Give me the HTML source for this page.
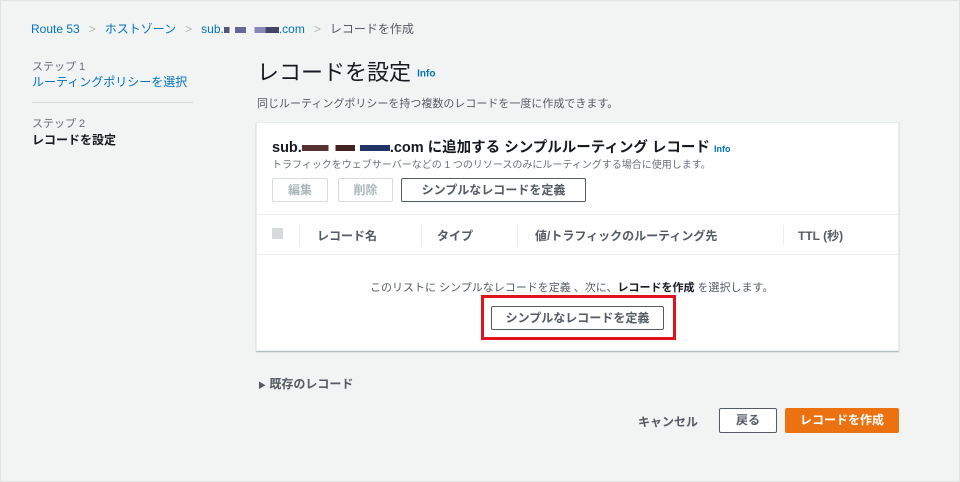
<!DOCTYPE html>
<html><head><meta charset="utf-8"><style>
*{box-sizing:border-box;margin:0;padding:0}
body{width:960px;height:482px;background:#f2f3f3;font-family:"Liberation Sans","Noto Sans CJK JP",sans-serif;color:#16191f;position:relative;overflow:hidden;border:1px solid #e0e2e2}
.a{position:absolute;white-space:nowrap}
.bc{top:19px;left:30px;font-size:12px;color:#545b64}
.bc .l{color:#0073bb}
.bc .s{color:#aab7b8;margin:0 9px}
.btn{position:absolute;border:1px solid #545b64;background:#fff;border-radius:2px;font-size:12px;font-weight:bold;color:#545b64;text-align:center}
.dis{border-color:#d5dbdb;color:#aab7b8}
.th{font-size:12px;font-weight:bold;color:#545b64;top:226px}
.sep{position:absolute;top:224px;width:1px;height:20px;background:#eaeded}
.blk{display:inline-block;height:6px;vertical-align:middle}
</style></head><body>
<div class="a bc"><span class="l">Route 53</span><span class="s">&gt;</span><span class="l">ホストゾーン</span><span class="s">&gt;</span><span class="l">sub.<span class="blk" style="width:55px;background:linear-gradient(90deg,#557 0 10%,transparent 10% 20%,#669 20% 40%,transparent 40% 55%,#88b 55% 75%,#446 75%)"></span>.com</span><span class="s">&gt;</span>レコードを作成</div>
<div class="a" style="top:57px;left:31px;font-size:11px;color:#687078">ステップ 1</div>
<div class="a" style="top:72px;left:31px;font-size:12px;color:#0073bb">ルーティングポリシーを選択</div>
<div class="a" style="top:101px;left:31px;width:161px;height:1px;background:#d5dbdb"></div>
<div class="a" style="top:114px;left:31px;font-size:11px;color:#687078">ステップ 2</div>
<div class="a" style="top:130px;left:31px;font-size:12px;font-weight:bold">レコードを設定</div>
<div class="a" style="top:54px;left:256px;font-size:22px;color:#16191f">レコードを設定 <span style="font-size:10px;font-weight:bold;color:#0073bb;vertical-align:middle">Info</span></div>
<div class="a" style="top:94px;left:256px;font-size:11px;color:#545b64">同じルーティングポリシーを持つ複数のレコードを一度に作成できます。</div>
<div class="a" style="top:121px;left:255px;width:643px;height:229px;background:#fff;border:1px solid #eaeded;box-shadow:0 1px 1px rgba(0,28,36,.3)"></div>
<div class="a" style="top:135px;left:271px;font-size:14.5px;font-weight:bold">sub.<span class="blk" style="width:88px;background:linear-gradient(90deg,#533 0 30%,#fff 30% 38%,#422 38% 60%,#fff 60% 66%,#236 66%)"></span>.com に追加する シンプルルーティング レコード <span style="font-size:9px;color:#0073bb">Info</span></div>
<div class="a" style="top:155px;left:271px;font-size:10px;color:#687078">トラフィックをウェブサーバーなどの 1 つのリソースのみにルーティングする場合に使用します。</div>
<div class="btn dis" style="left:271px;top:177px;width:56px;height:24px;line-height:22px">編集</div>
<div class="btn dis" style="left:337px;top:177px;width:55px;height:24px;line-height:22px">削除</div>
<div class="btn" style="left:400px;top:177px;width:185px;height:24px;line-height:22px">シンプルなレコードを定義</div>
<div class="a" style="top:213px;left:256px;width:641px;height:1px;background:#eaeded"></div>
<div class="a" style="top:227px;left:271px;width:11px;height:11px;background:#d5dbdb;border-radius:1px"></div>
<div class="sep" style="left:298px"></div><div class="sep" style="left:420px"></div><div class="sep" style="left:516px"></div><div class="sep" style="left:782px"></div>
<div class="a th" style="left:316px">レコード名</div>
<div class="a th" style="left:436px">タイプ</div>
<div class="a th" style="left:534px">値/トラフィックのルーティング先</div>
<div class="a th" style="left:797px">TTL (秒)</div>
<div class="a" style="top:253px;left:256px;width:641px;height:1px;background:#eaeded"></div>
<div class="a" style="top:278px;left:369px;font-size:11px;color:#545b64">このリストに シンプルなレコードを定義 、次に、<b style="color:#16191f">レコードを作成</b> を選択します。</div>
<div class="a" style="left:480px;top:294px;width:195px;height:45px;border:3px solid #e0131f"></div>
<div class="btn" style="left:490px;top:305px;width:173px;height:24px;line-height:22px">シンプルなレコードを定義</div>
<div class="a" style="top:374px;left:257px;font-size:12px;font-weight:bold;color:#545b64"><span style="font-size:8px">▶</span> 既存のレコード</div>
<div class="a" style="top:412px;left:637px;font-size:12px;font-weight:bold;color:#545b64">キャンセル</div>
<div class="btn" style="left:718px;top:407px;width:58px;height:25px;line-height:23px">戻る</div>
<div class="btn" style="left:784px;top:407px;width:114px;height:25px;line-height:23px;background:#ec7211;border-color:#ec7211;color:#fff">レコードを作成</div>
</body></html>
